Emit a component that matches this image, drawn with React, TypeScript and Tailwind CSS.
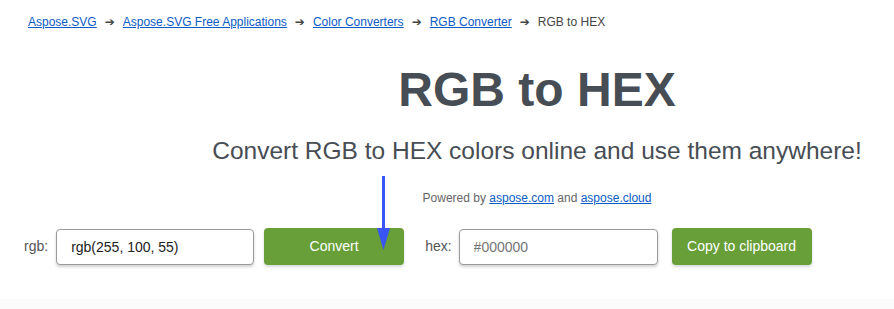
import React from 'react'

const crumbs = ['Aspose.SVG', 'Aspose.SVG Free Applications', 'Color Converters', 'RGB Converter']

export default function App() {
  return (
    <div className="relative w-[894px] h-[309px] overflow-hidden bg-white font-['Liberation_Sans',Arial,sans-serif]">
      {/* breadcrumbs */}
      <nav className="flex items-center pl-[28px] pt-[14px] h-[30px] text-[12px] leading-[16px]">
        {crumbs.map((c) => (
          <span key={c} className="flex items-center">
            <a href="#" className="text-[#0b5cc4] underline">{c}</a>
            <span className="mx-[8px] text-[#444] font-['DejaVu_Sans',sans-serif] text-[12px]">➔</span>
          </span>
        ))}
        <span className="text-[#444]">RGB to HEX</span>
      </nav>

      <div className="pl-[180px] text-center">
        <h1 className="mt-[36px] text-[48px] leading-[48px] font-bold text-[#474d54]">RGB to HEX</h1>
        <p className="mt-[25px] text-[24.5px] leading-[24px] text-[#474d54]">
          Convert RGB to HEX colors online and use them anywhere!
        </p>
        <p className="mt-[29px] text-[12px] leading-[12px] text-[#666]">
          Powered by <a href="#" className="text-[#0b5cc4] underline">aspose.com</a> and{' '}
          <a href="#" className="text-[#0b5cc4] underline">aspose.cloud</a>
        </p>
      </div>

      {/* converter form */}
      <div className="flex items-center mt-[24px] pl-[24px] h-[37px] text-[14px] text-[#555]">
        <label>rgb:</label>
        <input
          defaultValue="rgb(255, 100, 55)"
          className="ml-[8px] w-[198px] h-[36px] px-[14px] rounded-[4px] border border-[#9a9a9a] bg-white text-[#222] shadow-[0_2px_3px_rgba(0,0,0,0.18)] outline-none"
        />
        <button className="ml-[10px] w-[140px] h-[37px] rounded-[4px] bg-[#689f38] text-white shadow-[0_2px_3px_rgba(0,0,0,0.15)]">
          Convert
        </button>
        <label className="ml-[21px]">hex:</label>
        <input
          placeholder="#000000"
          className="ml-[7px] w-[199px] h-[36px] px-[14px] rounded-[4px] border border-[#9a9a9a] bg-white text-[#222] placeholder:text-[#757575] shadow-[0_2px_3px_rgba(0,0,0,0.18)] outline-none"
        />
        <button className="ml-[14px] w-[140px] h-[37px] rounded-[4px] bg-[#689f38] text-white shadow-[0_2px_3px_rgba(0,0,0,0.15)]">
          Copy to clipboard
        </button>
      </div>

      <div className="mt-[34px] h-[20px] bg-[#fbfbfb]" />

      {/* annotation arrow */}
      <svg className="absolute left-[376px] top-[176px]" width="16" height="76" viewBox="0 0 16 76">
        <line x1="7.5" y1="0" x2="7.5" y2="56" stroke="#3a55f5" strokeWidth="3" />
        <polygon points="1,52 14,52 7.5,74" fill="#3a55f5" />
      </svg>
    </div>
  )
}
